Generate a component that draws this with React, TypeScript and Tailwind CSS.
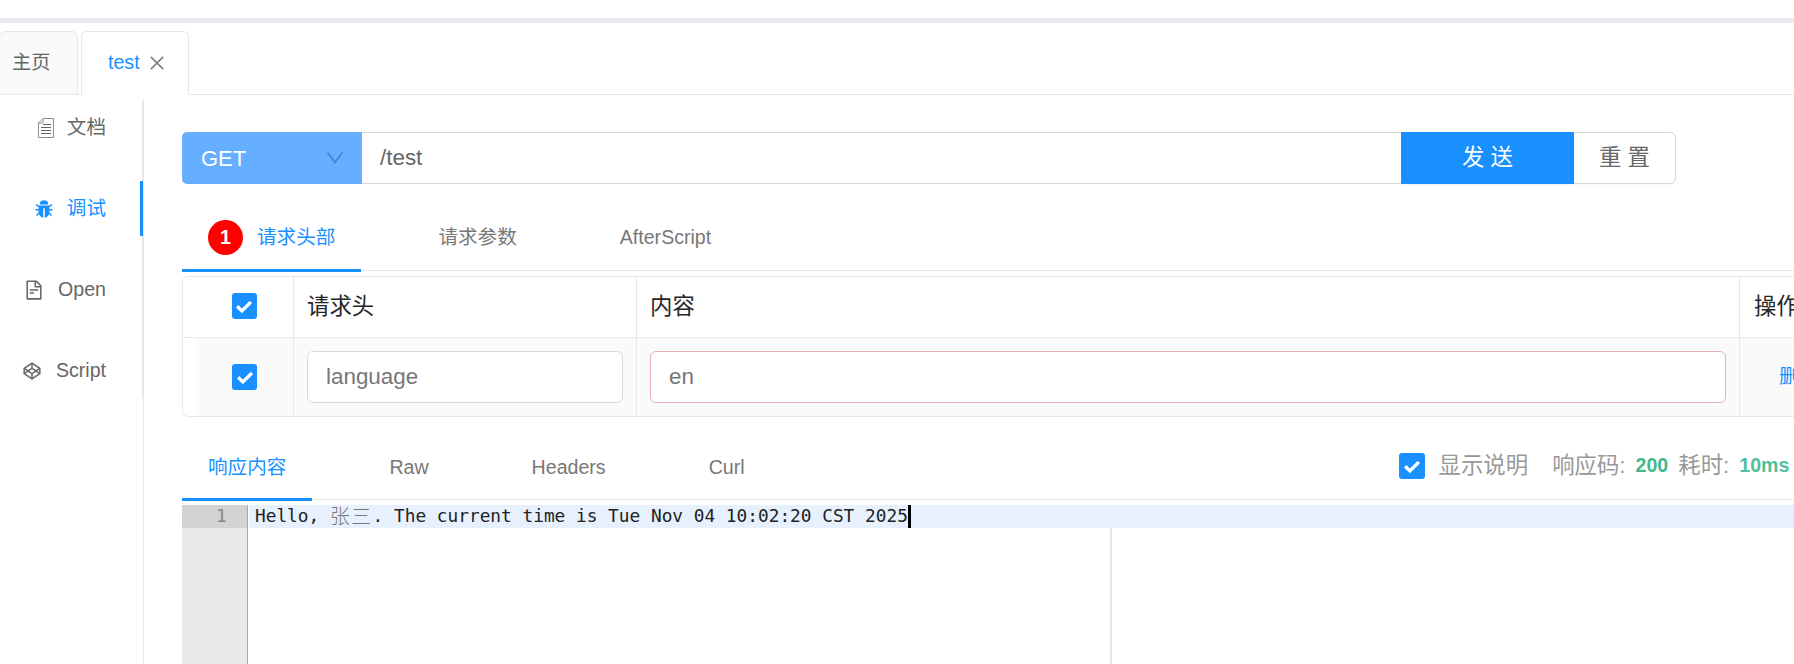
import { AiFillBug, AiOutlineClose, AiOutlineCodepen, AiOutlineDown, AiOutlineFileText } from "react-icons/ai";

function Check({ className }: { className: string }) {
  return (
    <span className={`flex items-center justify-center rounded-[3px] bg-[#1890ff] ${className}`}>
      <svg viewBox="0 0 16 16" className="w-[20px] h-[20px]" fill="none" stroke="white" strokeWidth="2.6">
        <path d="M2.5 8.2 L6.3 12 L13.5 4.8" />
      </svg>
    </span>
  );
}

function DocIcon() {
  return (
    <svg viewBox="0 0 16 20" className="w-[16px] h-[20px]" fill="none" stroke="#8c8c8c" strokeWidth="1">
      <path d="M5 0.5 H15.5 V19.5 H0.5 V5 Z M5 0.5 V5 H0.5" />
      <path d="M5 6.5 H13 M3 9.5 H13 M3 12.5 H13 M3 15.5 H13" stroke="#666" />
    </svg>
  );
}

function SideItem({ icon, label, active }: { icon: React.ReactNode; label: string; active?: boolean }) {
  return (
    <div className={`h-[55px] mb-[26px] flex items-center justify-end gap-[13px] pr-[34px] text-[19.6px] border-r-[3px] -mr-[1px] ${active ? "border-[#1890ff] text-[#1890ff]" : "border-transparent text-[#666]"}`}>
      {icon}
      <span>{label}</span>
    </div>
  );
}

function Tab({ active, first, className, children }: { active?: boolean; first?: boolean; className: string; children: React.ReactNode }) {
  return (
    <div className={`h-[calc(100%+2px)] flex items-center px-[26px] text-[19.6px] border-b-[3px] ${className} ${first ? "" : "ml-[51px]"} ${active ? "border-[#1890ff] text-[#1890ff]" : "border-transparent text-[#777]"}`}>
      {children}
    </div>
  );
}

export default function App() {
  return (
    <div className="w-[1794px] h-[664px] overflow-hidden bg-white font-['Liberation_Sans','Noto_Sans_CJK_SC',sans-serif]">
      <div className="h-[18px]" />
      <div className="h-[5px] bg-[#e9eaef]" />

      {/* page tabs */}
      <div className="h-[72px] pt-[8px] flex border-b border-[#e8e8e8]">
        <div className="w-[79px] -ml-[1px] h-[64px] flex items-center pl-[12px] bg-[#fafafa] border border-[#e8e8e8] rounded-t-[6px] text-[19.2px] text-[#666]">
          主页
        </div>
        <div className="ml-[3px] w-[108px] h-[64px] flex items-center pb-[2px] pl-[26px] bg-white border border-b-0 border-[#e8e8e8] rounded-t-[6px] text-[19.6px] text-[#1890ff]">
          test
          <AiOutlineClose className="ml-[7px] w-[20px] h-[20px] text-[#808080]" />
        </div>
      </div>

      <div className="flex h-[569px]">
        {/* sidebar */}
        <div className="w-[144px] shrink-0 mt-[5px] border-r border-[#e8e8e8]">
          <div className="w-[144px] h-[298px] border-r-2 border-[#e8e8e8] -mr-[1px]">
            <SideItem icon={<DocIcon />} label="文档" />
            <SideItem active icon={<AiFillBug className="w-[20px] h-[20px]" />} label="调试" />
            <SideItem icon={<AiOutlineFileText className="w-[22px] h-[22px]" />} label="Open" />
            <SideItem icon={<AiOutlineCodepen className="w-[22px] h-[22px]" />} label="Script" />
          </div>
        </div>

        {/* content */}
        <div className="w-[1700px] shrink-0 pl-[38px] pt-[37px]">
          <div className="w-[1494px] h-[52px] flex">
            <div className="w-[180px] h-[52px] flex items-center justify-between pl-[19px] pr-[16px] bg-[#66aeff] rounded-l-[5px] text-[22px] text-white">
              GET
              <AiOutlineDown className="w-[22px] h-[22px] text-[#4b83c4]" />
            </div>
            <div className="flex-1 h-[52px] flex items-center pl-[18px] border-y border-[#d9d9d9] text-[22.4px] text-[#666]">/test</div>
            <div className="w-[173px] h-[52px] flex items-center justify-center bg-[#1890ff] text-white text-[22.4px] shadow-[0_2px_0_rgba(0,0,0,0.04)]">发 送</div>
            <div className="w-[102px] h-[52px] flex items-center justify-center border border-l-0 border-[#d9d9d9] rounded-r-[6px] text-[#666] text-[22.4px] shadow-[0_2px_0_rgba(0,0,0,0.015)]">重 置</div>
          </div>

          {/* request tabs */}
          <div className="mt-[11px] h-[76px] flex border-b border-[#e8e8e8]">
            <Tab active first className="pt-[11px]">
              <span className="w-[35px] h-[35px] mr-[14px] rounded-full bg-[#ff0000] flex items-center justify-center text-white font-bold text-[19.6px]">1</span>
              请求头部
            </Tab>
            <Tab className="pt-[11px]">请求参数</Tab>
            <Tab className="pt-[11px]">AfterScript</Tab>
          </div>

          {/* header table */}
          <div className="mt-[5px] h-[141px] border border-[#e8e8e8] rounded-[6px] overflow-hidden">
            <div className="h-[61px] flex border-b border-[#e8e8e8] text-[22.4px] text-[#262626]">
              <div className="w-[111px] shrink-0 flex items-center justify-center pl-[12px] border-r border-[#e8e8e8]">
                <Check className="w-[25px] h-[26px] -mt-[2px]" />
              </div>
              <div className="w-[343px] shrink-0 flex items-center pl-[13px] border-r border-[#e8e8e8]">请求头</div>
              <div className="w-[1103px] shrink-0 flex items-center pl-[13px] border-r border-[#e8e8e8]">内容</div>
              <div className="flex-1 flex items-center pl-[14px]">操作</div>
            </div>
            <div className="h-[78px] flex ml-[13px] bg-[#fafafa]">
              <div className="w-[98px] shrink-0 flex items-center justify-center border-r border-[#e8e8e8]">
                <Check className="w-[25px] h-[26px]" />
              </div>
              <div className="w-[343px] shrink-0 flex items-center pl-[13px] border-r border-[#e8e8e8]">
                <input readOnly defaultValue="language" className="w-[316px] h-[52px] px-[18px] bg-white border border-[#d9d9d9] rounded-[6px] text-[22.4px] text-[#777] outline-none" />
              </div>
              <div className="w-[1103px] shrink-0 flex items-center pl-[13px] border-r border-[#e8e8e8]">
                <input readOnly defaultValue="en" className="w-[1076px] h-[52px] px-[18px] bg-white border border-[#e8b1b1] rounded-[6px] text-[22.4px] text-[#777] outline-none" />
              </div>
              <div className="flex-1 flex items-center pl-[39px] text-[19.6px] text-[#1890ff] whitespace-nowrap">删除</div>
            </div>
          </div>

          {/* response tabs */}
          <div className="h-[83px] flex border-b border-[#e8e8e8]">
            <Tab active first className="pt-[20px]">响应内容</Tab>
            <Tab className="pt-[20px]">Raw</Tab>
            <Tab className="pt-[20px]">Headers</Tab>
            <Tab className="pt-[20px]">Curl</Tab>
            <div className="ml-[628px] flex items-center pt-[15px] text-[#999] whitespace-nowrap">
              <Check className="w-[26px] h-[26px]" />
              <span className="ml-[14px] text-[22.4px]">显示说明</span>
              <span className="ml-[24px] text-[22.4px]">响应码:</span>
              <span className="ml-[10px] text-[19.6px] font-bold text-[#42b98d]">200</span>
              <span className="ml-[10px] text-[22.4px]">耗时:</span>
              <span className="ml-[10px] text-[19.6px] font-bold text-[#52c09a]">10ms</span>
            </div>
          </div>

          {/* response editor */}
          <div className="mt-[5px] h-[160px] flex">
            <div className="w-[66px] shrink-0 bg-[#e9e9e9] border-r border-[#a8a8a8]">
              <div className="h-[23px] bg-[#d3d3d3] flex items-center pl-[34px] text-[17.8px] text-[#888] font-['DejaVu_Sans_Mono',monospace]">1</div>
            </div>
            <div className="flex-1 ml-[1px]">
              <div className="h-[23px] flex items-center bg-[#e6f1fd] pl-[6px] text-[17.8px] text-[#222] whitespace-pre font-['DejaVu_Sans_Mono','Noto_Sans_CJK_SC',monospace]">
                Hello, <span className="w-[21.33px] font-light text-[#777] text-[20px]">张</span><span className="w-[21.33px] font-light text-[#777] text-[20px]">三</span>. The current time is Tue Nov 04 10:02:20 CST 2025
                <span className="w-[3px] h-[23px] bg-black" />
              </div>
              <div className="w-[863px] h-[137px] border-r-2 border-[#e8e8e8]" />
            </div>
          </div>
        </div>
      </div>
    </div>
  );
}
